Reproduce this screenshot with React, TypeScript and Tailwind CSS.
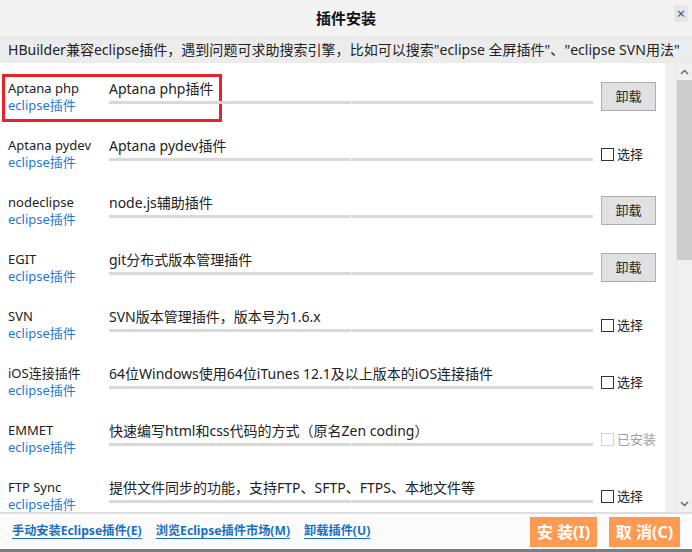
import React from "react";

type Row = {
  name: string;
  desc: string;
  action: "uninstall" | "select" | "installed";
};

const rows: Row[] = [
  { name: "Aptana php", desc: "Aptana php插件", action: "uninstall" },
  { name: "Aptana pydev", desc: "Aptana pydev插件", action: "select" },
  { name: "nodeclipse", desc: "node.js辅助插件", action: "uninstall" },
  { name: "EGIT", desc: "git分布式版本管理插件", action: "uninstall" },
  { name: "SVN", desc: "SVN版本管理插件，版本号为1.6.x", action: "select" },
  { name: "iOS连接插件", desc: "64位Windows使用64位iTunes 12.1及以上版本的iOS连接插件", action: "select" },
  { name: "EMMET", desc: "快速编写html和css代码的方式（原名Zen coding）", action: "installed" },
  { name: "FTP Sync", desc: "提供文件同步的功能，支持FTP、SFTP、FTPS、本地文件等", action: "select" },
];

const font = { fontFamily: '"Noto Sans", "Noto Sans CJK SC", sans-serif' };

function Action({ action }: { action: Row["action"] }) {
  if (action === "uninstall") {
    return (
      <div className="mt-[3px] flex h-[29px] w-[55px] items-center justify-center border border-[#adadad] bg-[#e1e1e1] text-[13px] text-[#222]">
        卸载
      </div>
    );
  }
  const disabled = action === "installed";
  return (
    <div className="mt-[11px] flex items-center gap-[3px]">
      <div
        className={
          disabled
            ? "h-[13px] w-[13px] border border-[#d4d4d4] bg-white"
            : "h-[13px] w-[13px] border border-[#333] bg-white"
        }
      />
      <span className={disabled ? "text-[13px] leading-[14px] text-[#a0a0a0]" : "text-[13px] leading-[14px] text-[#222]"}>
        {disabled ? "已安装" : "选择"}
      </span>
    </div>
  );
}

export default function App() {
  return (
    <div className="flex h-[552px] w-[692px] flex-col overflow-hidden bg-white" style={font}>
      {/* title bar */}
      <div className="relative flex h-[36px] shrink-0 items-center justify-center bg-[#f3f3f3]">
        <span className="text-[15px] font-bold text-[#111]">插件安装</span>
        <div className="absolute right-[4px] top-[5px] flex h-[17px] w-[14px] items-center justify-center bg-[#e6e6e6] text-[15px] leading-none text-[#555]">
          ×
        </div>
      </div>
      {/* info bar */}
      <div className="flex h-[27px] shrink-0 items-center whitespace-nowrap bg-[#ececec] pl-[8px] text-[14px] tracking-[0.03px] text-[#222]">
        HBuilder兼容eclipse插件，遇到问题可求助搜索引擎，比如可以搜索"eclipse 全屏插件"、"eclipse SVN用法"
      </div>
      {/* list */}
      <div className="flex h-[449px] shrink-0">
        <div className="relative h-full w-[665px] overflow-hidden bg-white pt-[16px]">
          <div className="absolute left-[2px] top-[11px] h-[48px] w-[220px] border-[3px] border-[#e8222a]" />
          {rows.map((r) => (
            <div key={r.name} className="flex h-[57px]">
              <div className="w-[109px] shrink-0 pl-[8px]">
                <div className="text-[13px] leading-[18px] text-[#222]">{r.name}</div>
                <div className="text-[13px] leading-[17px] text-[#1f78d8]">eclipse插件</div>
              </div>
              <div className="w-[484px] shrink-0">
                <div className="whitespace-nowrap text-[14px] leading-[20px] text-[#222]">{r.desc}</div>
                <div className="relative mt-[2px] h-[3px] w-full bg-[#d9d9d9]">
                  <div className="absolute left-[242px] top-0 h-[3px] w-[1px] bg-[#f2f2f2]" />
                </div>
              </div>
              <div className="ml-[8px]">
                <Action action={r.action} />
              </div>
            </div>
          ))}
        </div>
        {/* gutter + scrollbar */}
        <div className="flex h-full w-[27px] bg-[#f0f0f0]">
          <div className="w-[11px]" />
          <div className="flex w-[16px] flex-col border-l border-[#e6e6e6]">
            <div className="flex h-[17px] items-center justify-center">
              <svg width="9" height="6" viewBox="0 0 9 6">
                <path d="M1 5 L4.5 1.5 L8 5" fill="none" stroke="#606060" strokeWidth="1.3" />
              </svg>
            </div>
            <div className="h-[180px] bg-[#cdcdcd]" />
            <div className="flex-1" />
            <div className="flex h-[17px] items-center justify-center">
              <svg width="9" height="6" viewBox="0 0 9 6">
                <path d="M1 1 L4.5 4.5 L8 1" fill="none" stroke="#606060" strokeWidth="1.3" />
              </svg>
            </div>
          </div>
        </div>
      </div>
      {/* footer */}
      <div className="flex h-[37px] shrink-0 items-center border-t-2 border-[#dedede] bg-[#fbfbfb]">
        <div className="flex items-center gap-[14px] pl-[12px] text-[12.2px] font-bold text-[#1a6fc8]">
          <span className="underline underline-offset-[3px]">手动安装Eclipse插件(E)</span>
          <span className="underline underline-offset-[3px]">浏览Eclipse插件市场(M)</span>
          <span className="underline underline-offset-[3px]">卸载插件(U)</span>
        </div>
        <div className="ml-auto flex gap-[12px] pr-[12px]">
          <div className="flex h-[30px] w-[67px] items-center justify-center bg-[#ff9a52] text-[16px] font-bold text-white">
            安 装(I)
          </div>
          <div className="flex h-[30px] w-[71px] items-center justify-center bg-[#ff9a52] text-[16px] font-bold text-white">
            取 消(C)
          </div>
        </div>
      </div>
      <div className="h-[3px] shrink-0 bg-[#7d7d7d]" />
    </div>
  );
}
